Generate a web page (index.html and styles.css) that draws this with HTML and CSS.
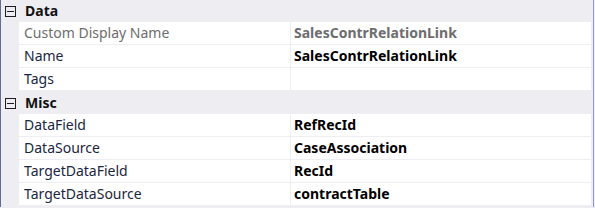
FILE: index.html
```html
<!DOCTYPE html>
<html lang="en">

<head>
    <meta charset="UTF-8">
    <title>Properties</title>
    <link rel="stylesheet" href="styles.css">
</head>

<body>
    <div class="grid">
        <div class="category first">
            <span class="toggle"></span>
            <span class="cat-name">Data</span>
        </div>
        <div class="prop readonly">
            <div class="label">Custom Display Name</div>
            <div class="value">SalesContrRelationLink</div>
        </div>
        <div class="prop">
            <div class="label">Name</div>
            <div class="value">SalesContrRelationLink</div>
        </div>
        <div class="prop">
            <div class="label">Tags</div>
            <div class="value"></div>
        </div>

        <div class="category">
            <span class="toggle"></span>
            <span class="cat-name">Misc</span>
        </div>
        <div class="prop">
            <div class="label">DataField</div>
            <div class="value">RefRecId</div>
        </div>
        <div class="prop">
            <div class="label">DataSource</div>
            <div class="value">CaseAssociation</div>
        </div>
        <div class="prop">
            <div class="label">TargetDataField</div>
            <div class="value">RecId</div>
        </div>
        <div class="prop">
            <div class="label">TargetDataSource</div>
            <div class="value">contractTable</div>
        </div>
    </div>
</body>

</html>
```

FILE: styles.css
```css
* {
    margin: 0;
    padding: 0;
    box-sizing: border-box;
}

body {
    width: 595px;
    height: 208px;
    overflow: hidden;
    background-color: #eeeef2;
    font-family: "Noto Sans", sans-serif;
    font-size: 14px;
}

.grid {
    width: 594px;
    height: 208px;
    border-left: 1px solid #5f6d96;
    border-right: 1px solid #8c9ccb;
    background-color: #eeeef2;
}

.category {
    height: 23px;
    display: flex;
    align-items: center;
    color: #111111;
    font-weight: bold;
}

.category.first {
    margin-top: -1px;
}

.toggle {
    position: relative;
    width: 11px;
    height: 11px;
    margin-left: 4px;
    margin-top: 1px;
    border: 1px solid #1e1e1e;
}

.toggle::after {
    content: "";
    position: absolute;
    left: 1px;
    top: 4px;
    width: 7px;
    height: 1px;
    background-color: #1e1e1e;
}

.cat-name {
    margin-left: 9px;
}

.prop {
    height: 23px;
    display: grid;
    grid-template-columns: 271px 1fr;
    column-gap: 1px;
    margin-left: 18px;
    margin-right: 2px;
    padding-bottom: 1px;
}

.label,
.value {
    background-color: #ffffff;
    line-height: 22px;
    white-space: nowrap;
    overflow: hidden;
}

.label {
    padding-left: 5px;
    color: #1b2640;
}

.value {
    padding-left: 3px;
    font-weight: bold;
    color: #000000;
}

.readonly .label,
.readonly .value {
    color: #6d6d6d;
}
```
